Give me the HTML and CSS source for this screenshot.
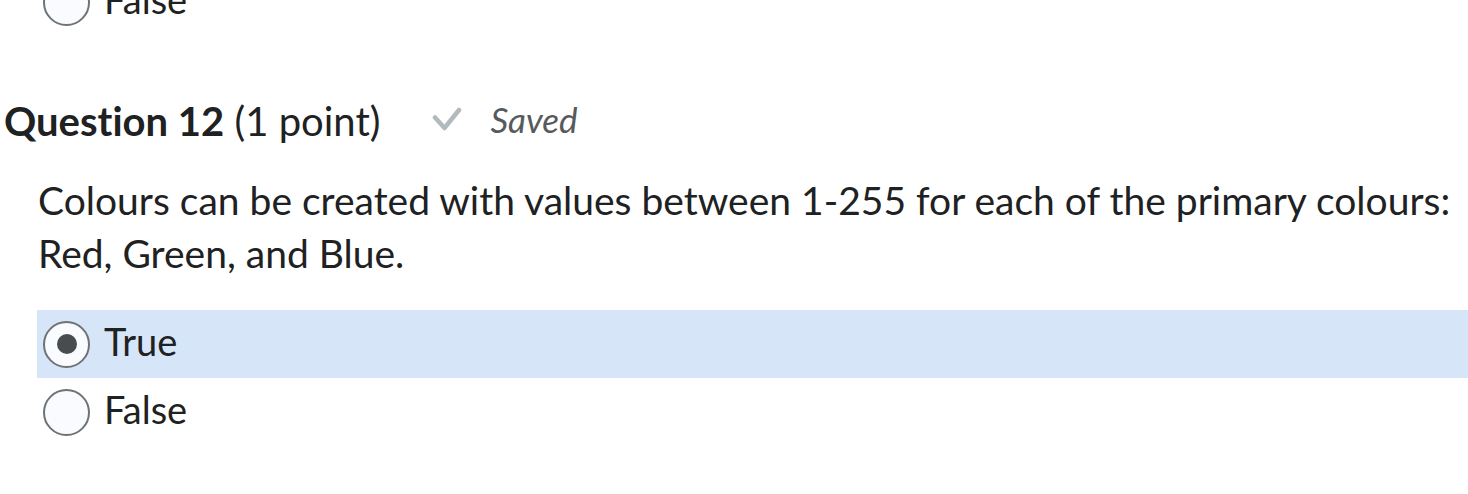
FILE: index.html
```html
<!DOCTYPE html>
<html lang="en">
<head>
<meta charset="utf-8">
<title>Quiz</title>
<link rel="stylesheet" href="styles.css">
</head>
<body>
<div class="page">
  <div class="options prev">
    <label class="option">
      <span class="radio"></span>
      <span class="opt-text">False</span>
    </label>
  </div>

  <section class="question">
    <div class="q-head">
      <h2 class="q-title"><strong>Question 12</strong> <span class="points">(1 point)</span></h2>
      <span class="saved">
        <svg class="check" width="30" height="26" viewBox="0 0 30 26" aria-hidden="true">
          <path d="M3 11.5 L12.5 22 L27 4" fill="none" stroke="#b3babe" stroke-width="4.5" stroke-linecap="round" stroke-linejoin="round"/>
        </svg>
        <em>Saved</em>
      </span>
    </div>
    <p class="q-body">Colours can be created with values between 1-255 for each of the primary colours: Red, Green, and Blue.</p>
    <div class="options">
      <label class="option selected">
        <span class="radio checked"></span>
        <span class="opt-text">True</span>
      </label>
      <label class="option">
        <span class="radio"></span>
        <span class="opt-text">False</span>
      </label>
    </div>
  </section>
</div>
</body>
</html>
```

FILE: styles.css
```css
* { box-sizing: border-box; }
html, body {
  margin: 0;
  padding: 0;
  background: #ffffff;
}
body {
  font-family: Lato, "Noto Sans", sans-serif;
  font-variant-ligatures: none;
  color: #202122;
  width: 1468px;
  height: 494px;
  overflow: hidden;
}
.page {
  margin-top: -32px;
}
.options {
  display: flex;
  flex-direction: column;
  margin-left: 37px;
}
.option {
  display: flex;
  align-items: center;
  gap: 14px;
  height: 68px;
  padding-left: 6px;
  font-size: 38px;
  color: #202122;
}
.opt-text {
  margin-bottom: 6px;
}
.option.selected {
  background: #d6e5f7;
}
.radio {
  width: 47px;
  height: 47px;
  border-radius: 50%;
  border: 2px solid #6e7376;
  background: #f9fbff;
  display: flex;
  align-items: center;
  justify-content: center;
  flex: none;
}
.radio.checked::after {
  content: "";
  width: 20px;
  height: 20px;
  border-radius: 50%;
  background: #494c4e;
}
.question {
  margin-top: 61px;
}
.q-head {
  display: flex;
  align-items: baseline;
  padding-left: 4px;
}
.q-title {
  margin: 0;
  font-size: 40px;
  font-weight: 400;
  color: #202122;
}
.q-title strong {
  font-weight: 700;
}
.saved {
  margin-left: 52px;
  display: inline-flex;
  align-items: center;
  gap: 28px;
  color: #565a5c;
  font-size: 35px;
  transform: translateY(-4px);
}
.q-body {
  margin: 29px 0 30px 38px;
  font-size: 39px;
  line-height: 53px;
  color: #202122;
  max-width: 1420px;
}
```
